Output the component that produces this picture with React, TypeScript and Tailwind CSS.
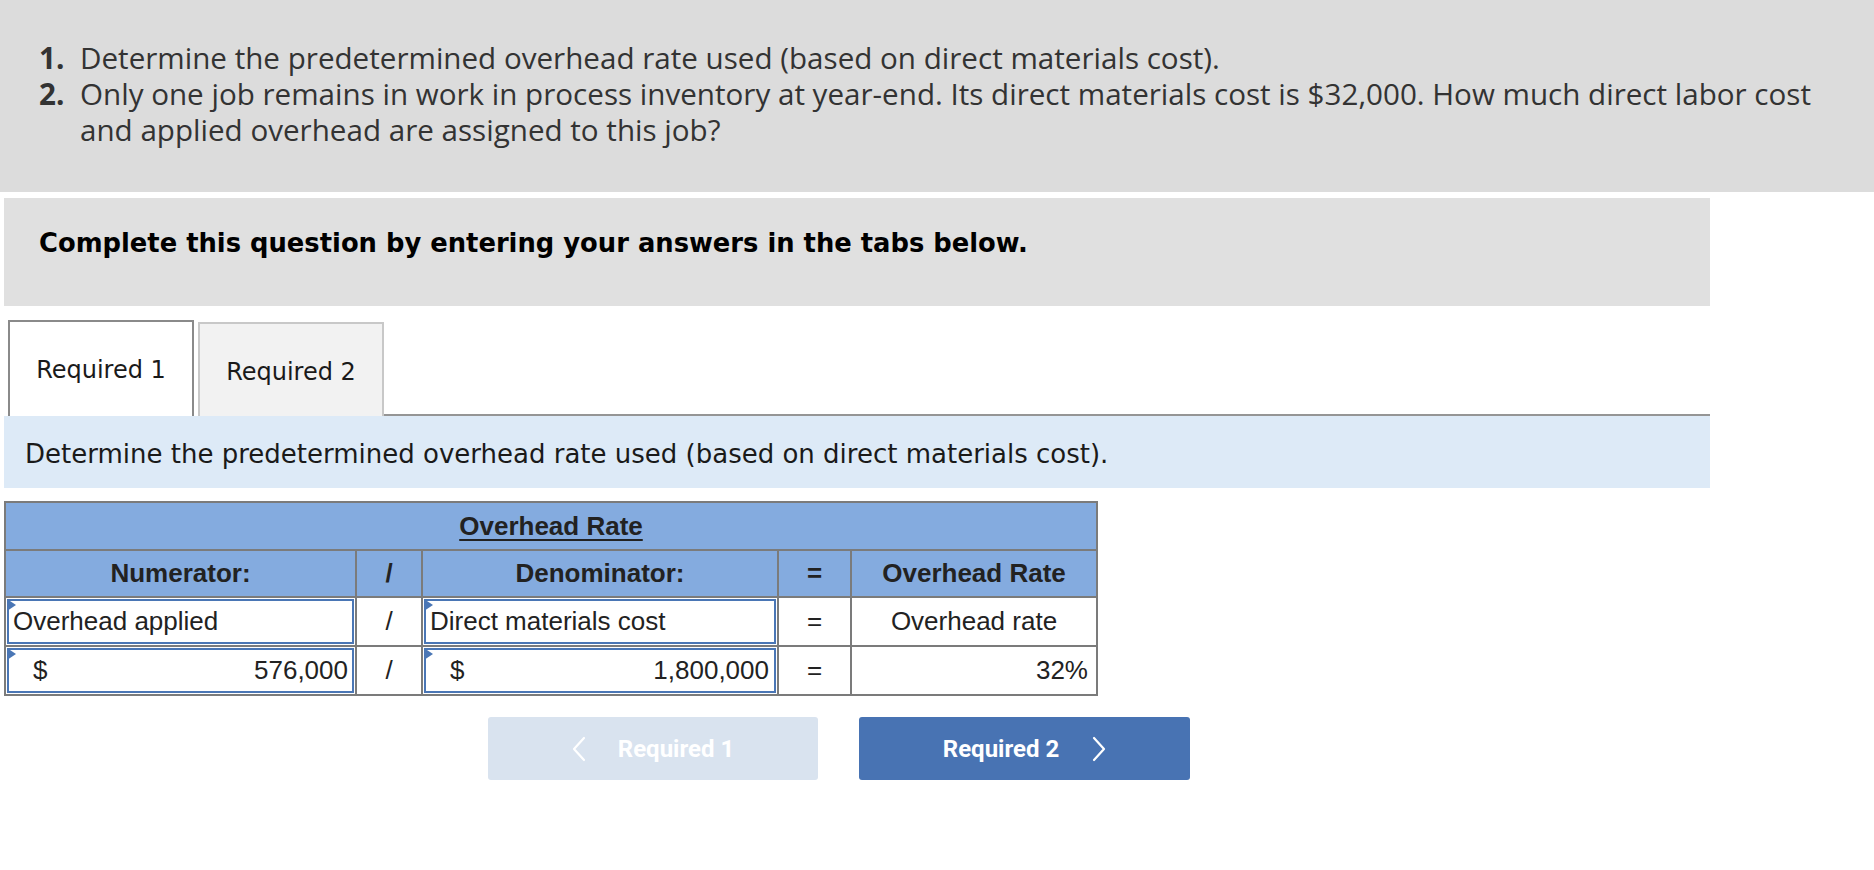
import React from 'react';

const InputCell: React.FC<{ children: React.ReactNode; className?: string }> = ({ children, className }) => (
  <td className="p-0 border-2 border-[#7b7b7b]">
    <div className={`relative m-px h-[45px] border-2 border-[#4a76b5] bg-white flex items-center ${className ?? ''}`}>
      <span className="absolute -left-[2px] -top-[2px] w-0 h-0 border-t-[6px] border-b-[6px] border-l-[9px] border-t-transparent border-b-transparent border-l-[#4a76b5]" />
      {children}
    </div>
  </td>
);

const Chevron: React.FC<{ dir: 'left' | 'right' }> = ({ dir }) => (
  <svg width="14" height="26" viewBox="0 0 14 26" fill="none" stroke="currentColor" strokeWidth="2.2" strokeLinecap="round" strokeLinejoin="round">
    {dir === 'left' ? <polyline points="12,2 2,13 12,24" /> : <polyline points="2,2 12,13 2,24" />}
  </svg>
);

const App: React.FC = () => {
  const cell = 'border-2 border-[#7b7b7b] text-center';

  return (
    <div className="min-h-screen bg-white">
      {/* question */}
      <div className="h-[192px] bg-[#dcdcdc] pt-[40px] pl-[39px] pr-[4px] text-[#333] text-[29.6px] leading-[36px] [font-family:'Open_Sans',Lato,sans-serif]">
        <div className="flex">
          <span className="w-[41px] shrink-0 font-bold">1.</span>
          <span>Determine the predetermined overhead rate used (based on direct materials cost).</span>
        </div>
        <div className="flex">
          <span className="w-[41px] shrink-0 font-bold">2.</span>
          <span>
            Only one job remains in work in process inventory at year-end. Its direct materials cost is $32,000. How much direct labor cost and applied overhead are assigned to this job?
          </span>
        </div>
      </div>

      <div className="w-[1706px] ml-[4px] [font-family:'DejaVu_Sans',Verdana,sans-serif]">
        <div className="mt-[6px] h-[108px] bg-[#e0e0e0] pt-[30px] pl-[35px] text-[25.8px] leading-[30px] font-bold text-black">
          Complete this question by entering your answers in the tabs below.
        </div>

        {/* tabs */}
        <div className="mt-[14px] flex items-end">
          <div className="ml-[4px] w-[186px] h-[96px] border-2 border-b-0 border-[#8a8a8a] bg-white pt-[34px] text-center text-[24px] leading-[28px] text-[#1a1a1a]">
            Required 1
          </div>
          <div className="ml-[4px] w-[186px] h-[94px] border-2 border-[#c8c8c8] border-b-0 bg-[#f2f2f2] pt-[34px] text-center text-[24px] leading-[28px] text-[#1a1a1a]">
            Required 2
          </div>
          <div className="flex-1 h-[2px] bg-[#959595]" />
        </div>

        <div className="h-[72px] bg-[#ddeaf7] pt-[23px] pl-[21px] text-[26px] leading-[30px] text-[#1a1a1a]">
          Determine the predetermined overhead rate used (based on direct materials cost).
        </div>

        {/* table */}
        <table className="mt-[13px] table-fixed border-collapse [font-family:'Liberation_Sans',Arial,sans-serif] text-[26px] text-[#222]">
          <colgroup>
            <col className="w-[351px]" />
            <col className="w-[66px]" />
            <col className="w-[356px]" />
            <col className="w-[73px]" />
            <col className="w-[246px]" />
          </colgroup>
          <thead>
            <tr className="bg-[#84abdf] h-[48px]">
              <th colSpan={5} className={`${cell} font-bold`}>
                <span className="underline decoration-2 underline-offset-[4px]">Overhead Rate</span>
              </th>
            </tr>
            <tr className="bg-[#84abdf] h-[47px] font-bold">
              <th className={cell}>Numerator:</th>
              <th className={cell}>/</th>
              <th className={cell}>Denominator:</th>
              <th className={cell}>=</th>
              <th className={cell}>Overhead Rate</th>
            </tr>
          </thead>
          <tbody>
            <tr className="h-[47px]">
              <InputCell className="pl-[4px]">Overhead applied</InputCell>
              <td className={cell}>/</td>
              <InputCell className="pl-[4px]">Direct materials cost</InputCell>
              <td className={cell}>=</td>
              <td className={cell}>Overhead rate</td>
            </tr>
            <tr className="h-[47px]">
              <InputCell className="justify-between pl-[24px] pr-[4px]">
                <span>$</span>
                <span>576,000</span>
              </InputCell>
              <td className={cell}>/</td>
              <InputCell className="justify-between pl-[24px] pr-[5px]">
                <span>$</span>
                <span>1,800,000</span>
              </InputCell>
              <td className={cell}>=</td>
              <td className={`${cell} text-right pr-[8px]`}>32%</td>
            </tr>
          </tbody>
        </table>

        {/* navigation */}
        <div className="mt-[21px] flex gap-[41px] pl-[484px] [font-family:Roboto,Lato,sans-serif] text-[24px] font-bold text-white">
          <button type="button" disabled className="w-[330px] h-[63px] rounded-[3px] bg-[#d9e3ef] flex items-center justify-center gap-[32px]">
            <Chevron dir="left" />
            <span>Required 1</span>
          </button>
          <button type="button" className="w-[331px] h-[63px] rounded-[3px] bg-[#4873b3] flex items-center justify-center gap-[33px]">
            <span>Required 2</span>
            <Chevron dir="right" />
          </button>
        </div>
      </div>
    </div>
  );
};

export default App;
